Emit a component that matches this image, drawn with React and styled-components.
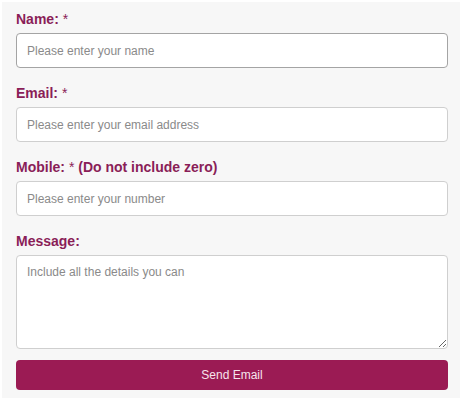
import React from "react";
import styled, { createGlobalStyle } from "styled-components";

const Global = createGlobalStyle`
  html, body { margin: 0; padding: 0; background: #ffffff; }
  body { font-family: "Liberation Sans", Arial, sans-serif; }
  * { box-sizing: border-box; }
`;

const Panel = styled.form`
  margin: 2px;
  width: 458px;
  height: 396px;
  background: #f7f7f7;
  padding: 9px 12px 8px 14px;
  display: flex;
  flex-direction: column;
`;

const Field = styled.div`
  display: flex;
  flex-direction: column;
  margin-bottom: 17px;
`;

const Label = styled.label`
  display: block;
  height: 16px;
  font-size: 14px;
  line-height: 16px;
  font-weight: bold;
  color: #8a1e58;
  margin-bottom: 6px;
  white-space: nowrap;
`;

const Star = styled.span`
  font-weight: normal;
`;

const Input = styled.input`
  height: 35px;
  width: 100%;
  border: 1px solid ${(p) => (p.$focused ? "#a4a4a4" : "#cfcfcf")};
  border-radius: 4px;
  background: #ffffff;
  padding: 0 10px;
  font-family: "Liberation Sans", Arial, sans-serif;
  font-size: 12px;
  color: #333;
  outline: none;
  &::placeholder { color: #8a8a8a; }
`;

const TextArea = styled.textarea`
  height: 94px;
  width: 100%;
  border: 1px solid #cfcfcf;
  border-radius: 4px;
  background: #ffffff;
  padding: 9px 10px;
  font-family: "Liberation Sans", Arial, sans-serif;
  font-size: 12px;
  color: #333;
  outline: none;
  resize: vertical;
  display: block;
  &::placeholder { color: #8a8a8a; }
`;

const MessageField = styled(Field)`
  margin-bottom: 11px;
`;

const Button = styled.button`
  height: 30px;
  width: 100%;
  border: none;
  border-radius: 4px;
  background: #9b1b54;
  color: #f7e3ec;
  font-family: "Liberation Sans", Arial, sans-serif;
  font-size: 12px;
  cursor: pointer;
`;

export default function App() {
  return (
    <>
      <Global />
      <Panel onSubmit={(e) => e.preventDefault()}>
        <Field>
          <Label htmlFor="name">Name: <Star>*</Star></Label>
          <Input id="name" $focused autoFocus placeholder="Please enter your name" />
        </Field>
        <Field>
          <Label htmlFor="email">Email: <Star>*</Star></Label>
          <Input id="email" placeholder="Please enter your email address" />
        </Field>
        <Field>
          <Label htmlFor="mobile">Mobile: <Star>*</Star> (Do not include zero)</Label>
          <Input id="mobile" placeholder="Please enter your number" />
        </Field>
        <MessageField>
          <Label htmlFor="message">Message:</Label>
          <TextArea id="message" placeholder="Include all the details you can" />
        </MessageField>
        <Button type="submit">Send Email</Button>
      </Panel>
    </>
  );
}
